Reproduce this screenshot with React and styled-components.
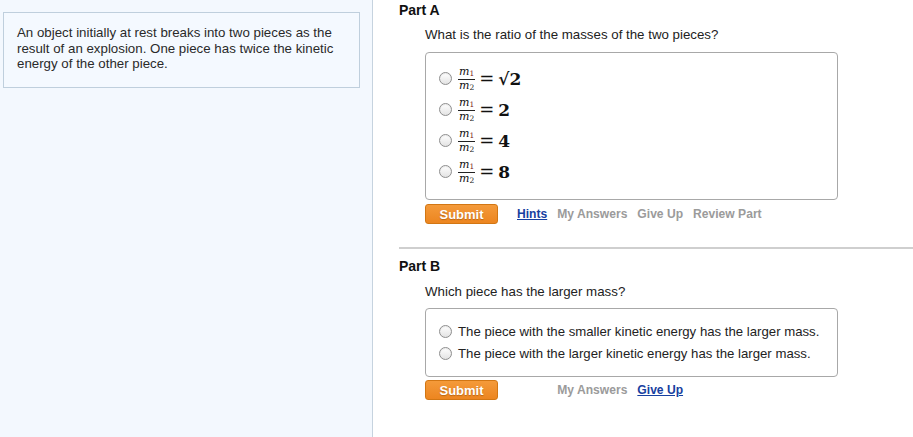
import styled, { createGlobalStyle } from 'styled-components';

const GlobalStyle = createGlobalStyle`
  html, body {
    margin: 0;
    padding: 0;
    background: #ffffff;
  }
  body {
    font-family: "Liberation Sans", Arial, Helvetica, sans-serif;
    color: #222;
  }
`

const Page = styled.div`
  display: flex;
  width: 913px;
  height: 437px;
  overflow: hidden;
`

const LeftPanel = styled.aside`
  width: 373px;
  flex-shrink: 0;
  box-sizing: border-box;
  background-color: #f3f8fe;
  border-right: 1px solid #c6d3df;
  padding: 12px 13px 0 3px;
`

const ProblemBox = styled.div`
  box-sizing: border-box;
  width: 357px;
  height: 76px;
  border: 1px solid #bfcfdd;
  background-color: #f4f9ff;
  padding: 12px 12px 0 13px;
  font-size: 13.3px;
  line-height: 15.6px;
  color: #2a2a2a;
`

const Main = styled.main`
  flex: 1;
  padding: 2px 0 0 26px;
`

const PartTitle = styled.h2`
  margin: 0;
  font-size: 14px;
  line-height: 16px;
  font-weight: 700;
  color: #111;
`

const PartBody = styled.div`
  padding-left: 26px;
`

const Question = styled.p`
  margin: ${p => p.$top}px 0 ${p => p.$bottom}px;
  font-size: 13.3px;
  line-height: 16px;
  color: #222;
`

const AnswerBox = styled.div`
  box-sizing: border-box;
  width: 413px;
  border: 1px solid #a8a8a8;
  border-radius: 4px;
  background: #fff;
  padding: ${p => p.$pad};
`

const Option = styled.label`
  display: flex;
  align-items: center;
  height: ${p => p.$h}px;
  gap: 6px;
  font-size: 13.2px;
  color: #222;
`

const Radio = styled.span`
  width: 11px;
  height: 11px;
  flex-shrink: 0;
  border-radius: 50%;
  border: 1px solid #8e8e8e;
  background: linear-gradient(#ffffff, #e3e3e3);
  box-shadow: inset 0 1px 1px rgba(0, 0, 0, 0.08);
`

const Formula = styled.span`
  display: inline-flex;
  align-items: center;
  gap: 3px;
  font-family: "DejaVu Serif", "Liberation Serif", serif;
  color: #111;
`

const Fraction = styled.span`
  display: inline-flex;
  flex-direction: column;
  align-items: center;
  font-style: italic;
  font-size: 11px;
  line-height: 11.5px;
  margin-top: 2px;
`

const Num = styled.span`
  padding: 0 1px;
  border-bottom: 1px solid #222;
`

const Sub = styled.sub`
  font-style: normal;
  font-size: 7.5px;
  vertical-align: -1px;
  color: ${p => p.$red ? '#7a1a1a' : '#222'};
`

const Value = styled.span`
  font-size: 17px;
  font-weight: 700;
  line-height: 18px;
`

const Eq = styled.span`
  font-size: 18px;
  line-height: 18px;
  margin: 0 1px;
`

const Actions = styled.div`
  display: flex;
  align-items: center;
  margin-top: ${p => p.$top}px;
  height: 20px;
`

const SubmitButton = styled.button`
  box-sizing: border-box;
  width: 73px;
  height: 20px;
  margin-right: 19px;
  padding: 0;
  border: 1px solid #d27613;
  border-radius: 3px;
  background: linear-gradient(#f49a3a, #ec8520);
  color: #fff;
  font-family: "Liberation Sans", Arial, sans-serif;
  font-size: 13px;
  font-weight: 700;
  text-shadow: 0 1px 1px rgba(120, 60, 0, 0.45);
  cursor: pointer;
`

const LinkRow = styled.div`
  display: flex;
  gap: 10px;
  font-size: 12.1px;
  font-weight: 700;
`

const ActionLink = styled.a`
  color: ${p => p.$active ? '#1740a0' : '#9b9b9b'};
  text-decoration: ${p => p.$active ? 'underline' : 'none'};
  visibility: ${p => p.$hidden ? 'hidden' : 'visible'};
  cursor: pointer;
`

const Separator = styled.hr`
  margin: 23px 0 9px;
  border: none;
  height: 2px;
  background: #cfcfcf;
`

const ratios = ['√2', '2', '4', '8'];

function Ratio({ value }) {
  return (
    <Formula>
      <Fraction>
        <Num>m<Sub $red>1</Sub></Num>
        <span>m<Sub>2</Sub></span>
      </Fraction>
      <Eq>=</Eq>
      <Value>{value}</Value>
    </Formula>
  )
}

function App() {
  return (
    <>
      <GlobalStyle />
      <Page>
        <LeftPanel>
          <ProblemBox>
            An object initially at rest breaks into two pieces as the result of an explosion. One piece has twice the kinetic energy of the other piece.
          </ProblemBox>
        </LeftPanel>
        <Main>
          <PartTitle>Part A</PartTitle>
          <PartBody>
            <Question $top={9} $bottom={9}>What is the ratio of the masses of the two pieces?</Question>
            <AnswerBox $pad="10px 12px 12px 13px">
              {ratios.map(r => (
                <Option key={r} $h={31}>
                  <Radio />
                  <Ratio value={r} />
                </Option>
              ))}
            </AnswerBox>
            <Actions $top={4}>
              <SubmitButton>Submit</SubmitButton>
              <LinkRow>
                <ActionLink $active>Hints</ActionLink>
                <ActionLink>My Answers</ActionLink>
                <ActionLink>Give Up</ActionLink>
                <ActionLink>Review Part</ActionLink>
              </LinkRow>
            </Actions>
          </PartBody>
          <Separator />
          <PartTitle>Part B</PartTitle>
          <PartBody>
            <Question $top={10} $bottom={8}>Which piece has the larger mass?</Question>
            <AnswerBox $pad="11px 12px 12px 13px">
              <Option $h={22}>
                <Radio />
                The piece with the smaller kinetic energy has the larger mass.
              </Option>
              <Option $h={22}>
                <Radio />
                The piece with the larger kinetic energy has the larger mass.
              </Option>
            </AnswerBox>
            <Actions $top={3}>
              <SubmitButton>Submit</SubmitButton>
              <LinkRow>
                <ActionLink $hidden>Hints</ActionLink>
                <ActionLink>My Answers</ActionLink>
                <ActionLink $active>Give Up</ActionLink>
              </LinkRow>
            </Actions>
          </PartBody>
        </Main>
      </Page>
    </>
  )
}

export default App;
